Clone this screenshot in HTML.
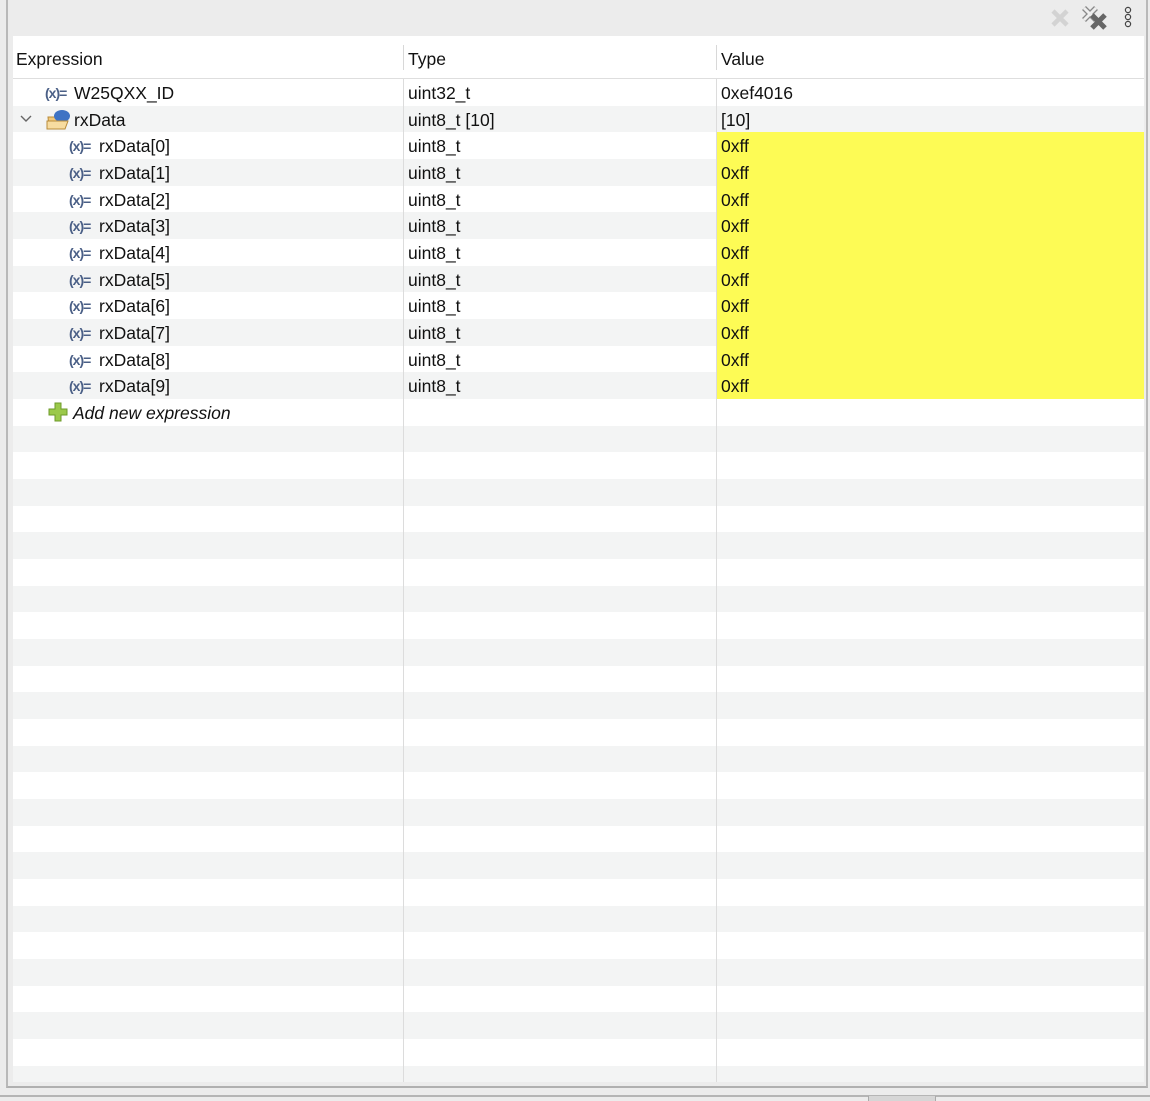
<!DOCTYPE html>
<html><head><meta charset="utf-8"><style>
*{margin:0;padding:0;box-sizing:border-box}
body{width:1150px;height:1101px;background:#ececec;font-family:"Liberation Sans",Helvetica,Arial,sans-serif;position:relative;overflow:hidden;color:#111}
.frame{position:absolute;left:6px;top:0;width:1142px;height:1088px;border-left:2px solid #b9b9b9;border-right:2px solid #b9b9b9;border-bottom:2px solid #b0b0b0}
.tbl{position:absolute;left:13px;top:36px;width:1131px;height:1046px;background:#fff;overflow:hidden}
.hdr{position:absolute;left:0;top:0;width:100%;height:43px;border-bottom:1px solid #dedede;background:#fff}
.hdr span{position:absolute;top:13px;font-size:17.5px}
.hdiv{position:absolute;top:9px;width:1px;height:25px;background:#d8d8d8}
.row{position:absolute;left:0;width:100%;height:26.67px;font-size:17.5px;line-height:28px}
.row.g{background:#f3f4f4}
.cdiv{position:absolute;top:43px;bottom:0;width:1px;background:#dcdcdc}
.c{position:absolute;top:0;white-space:nowrap}
.y{position:absolute;left:704px;top:0;width:427px;height:100%;background:#fdfb55}
.ico{font-size:14px;color:#4a5f86;font-weight:bold;letter-spacing:-1px}
</style></head><body>
<div class="frame"></div>
<svg style="position:absolute;left:1049px;top:7px" width="22" height="22" viewBox="0 0 22 22"><path d="M4 4L18 18M18 4L4 18" stroke="#d3d3d3" stroke-width="4.5"/></svg>
<svg style="position:absolute;left:1080px;top:4px" width="30" height="28" viewBox="0 0 30 28"><path d="M4 4L16 16M16 4L4 16" stroke="#888" stroke-width="5.5"/><path d="M4 4L16 16M16 4L4 16" stroke="#eee" stroke-width="3"/><path d="M12 11L25 24M25 11L12 24" stroke="#666" stroke-width="5"/></svg>
<svg style="position:absolute;left:1122px;top:6px" width="12" height="24" viewBox="0 0 12 24"><circle cx="6" cy="4" r="2.6" fill="none" stroke="#444" stroke-width="1.2"/><circle cx="6" cy="11" r="2.6" fill="none" stroke="#444" stroke-width="1.2"/><circle cx="6" cy="18" r="2.6" fill="none" stroke="#444" stroke-width="1.2"/></svg>
<div class="tbl">
<div id="rows"></div>
<div class="hdr"><span style="left:3px">Expression</span><div class="hdiv" style="left:390px"></div><span style="left:395px">Type</span><div class="hdiv" style="left:703px"></div><span style="left:708px">Value</span></div>
<div class="cdiv" style="left:390px"></div><div class="cdiv" style="left:703px"></div>
</div>
<div style="position:absolute;left:0;top:1095px;width:1150px;height:6px;border-top:2px solid #b5b5b5;background:#ececec"></div>
<div style="position:absolute;left:868px;top:1096px;width:68px;height:5px;background:#d6d6d6;border-left:1px solid #aaa;border-right:1px solid #aaa"></div>
<script>
var R=document.getElementById('rows');var h='';
var data=[["W25QXX_ID","uint32_t","0xef4016",0],["rxData","uint8_t [10]","[10]",1]];
for(var i=0;i<10;i++)data.push(["rxData["+i+"]","uint8_t","0xff",2]);
data.push(["Add new expression","","",3]);
for(var i=0;i<38;i++){
 var t=43+i*26.67;var d=data[i];
 h+='<div class="row'+(i%2?' g':'')+'" style="top:'+t+'px">';
 if(d){
  if(d[3]==2)h+='<div class="y"></div>';
  if(d[3]==0)h+='<span class="c ico" style="left:32px">(x)=</span><span class="c" style="left:61px">'+d[0]+'</span>';
  if(d[3]==1)h+='<svg class="c" style="left:7px;top:8px" width="12" height="10" viewBox="0 0 12 10"><path d="M1 2l5 5 5-5" fill="none" stroke="#666" stroke-width="1.4"/></svg><svg class="c" style="left:33px;top:2px" width="26" height="22" viewBox="0 0 26 22"><path d="M2 9h20l-3 11H3z" fill="#f2c87a" stroke="#b88b3a"/><ellipse cx="16" cy="8" rx="8" ry="6" fill="#3f73c4"/><path d="M1 13h21l-3 8H1z" fill="#f7dca0" stroke="#b88b3a"/></svg><span class="c" style="left:61px">'+d[0]+'</span>';
  if(d[3]==2)h+='<span class="c ico" style="left:56px">(x)=</span><span class="c" style="left:86px">'+d[0]+'</span>';
  if(d[3]==3)h+='<svg class="c" style="left:35px;top:3px" width="20" height="20" viewBox="0 0 20 20"><path d="M7 1h6v6h6v6h-6v6H7v-6H1V7h6z" fill="#9bc94a" stroke="#6d9a2a"/></svg><span class="c" style="left:60px;font-style:italic">'+d[0]+'</span>';
  h+='<span class="c" style="left:395px">'+d[1]+'</span><span class="c" style="left:708px">'+d[2]+'</span>';
 }
 h+='</div>';
}
R.innerHTML=h;
</script>
</body></html>
